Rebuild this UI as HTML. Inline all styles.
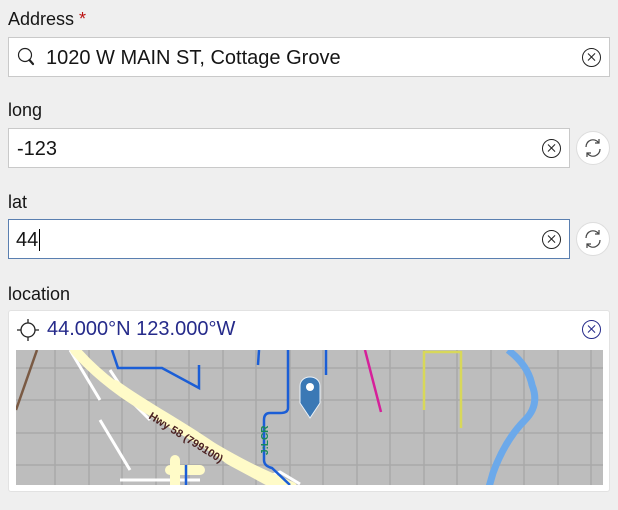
<!DOCTYPE html>
<html><head><style>
body{margin:0;width:618px;height:510px;background:#efefef;font-family:"Liberation Sans",sans-serif;color:#151515;position:relative;overflow:hidden}
.lbl{position:absolute;left:8px;font-size:18px}
.inp{position:absolute;left:8px;background:#fff;border:1px solid #c9c9c9;box-sizing:border-box;height:40px;font-size:20px;line-height:40px}
.x{position:absolute;width:19px;height:19px;border:1.3px solid #222;border-radius:50%;top:10px;box-sizing:border-box}
.x:before,.x:after{content:"";position:absolute;left:7.6px;top:3.2px;width:1.2px;height:10px;background:#222;transform:rotate(45deg)}
.x:after{transform:rotate(-45deg)}
.rb{position:absolute;left:576px;width:34px;height:34px;border-radius:50%;background:#fff;border:1px solid #ddd;box-sizing:border-box}
</style></head><body>
<div class="lbl" style="top:9px">Address <span style="color:#b11">*</span></div>
<div class="inp" style="top:37px;width:602px">
<svg style="position:absolute;left:7px;top:8px" width="22" height="22" viewBox="0 0 22 22"><circle cx="9" cy="9" r="6.5" fill="none" stroke="#222" stroke-width="1.2"/><path d="M13.5 14l3.5 4" stroke="#222" stroke-width="2.2" stroke-linecap="round"/></svg>
<span style="position:absolute;left:37px">1020 W MAIN ST, Cottage Grove</span>
<div class="x" style="left:573px"></div></div>

<div class="lbl" style="top:100px">long</div>
<div class="inp" style="top:128px;width:562px"><span style="position:absolute;left:8px">-123</span><div class="x" style="left:533px"></div></div>
<div class="rb" style="top:131px"><svg width="32" height="32" viewBox="0 0 32 32"><path d="M9 15a7 7 0 0 1 12.5-4.5M23 17a7 7 0 0 1-12.5 4.5" fill="none" stroke="#444" stroke-width="1.2"/><path d="M22 7v4h-4M10 25v-4h4" fill="none" stroke="#444" stroke-width="1.2"/></svg></div>

<div class="lbl" style="top:192px">lat</div>
<div class="inp" style="top:219px;width:562px;border-color:#5a7fb0"><span style="position:absolute;left:7px">44<span style="border-left:1px solid #000;margin-left:1px"></span></span><div class="x" style="left:533px"></div></div>
<div class="rb" style="top:222px"><svg width="32" height="32" viewBox="0 0 32 32"><path d="M9 15a7 7 0 0 1 12.5-4.5M23 17a7 7 0 0 1-12.5 4.5" fill="none" stroke="#444" stroke-width="1.2"/><path d="M22 7v4h-4M10 25v-4h4" fill="none" stroke="#444" stroke-width="1.2"/></svg></div>

<div class="lbl" style="top:284px">location</div>
<div style="position:absolute;left:8px;top:310px;width:602px;height:182px;background:#fff;border-radius:3px;border:1px solid #e2e2e2;box-sizing:border-box"></div>
<svg style="position:absolute;left:16px;top:318px" width="24" height="24" viewBox="0 0 24 24"><circle cx="12" cy="12" r="7" fill="none" stroke="#222" stroke-width="1.3"/><path d="M12 1v4M12 19v4M1 12h4M19 12h4" stroke="#222" stroke-width="1.3"/></svg>
<div style="position:absolute;left:47px;top:318px;font-size:20px;color:#252a8a">44.000°N 123.000°W</div>
<div class="x xb" style="left:582px;top:320px;border-color:#252a8a"></div>
<style>.xb:before,.xb:after{background:#252a8a}</style>
<svg style="position:absolute;left:16px;top:350px" width="587" height="135" viewBox="16 350 587 135">
<rect x="16" y="350" width="587" height="135" fill="#bdbdbd"/>
<g stroke="#a9a9a9" stroke-width="1.5">
<path d="M55 350v135M89 350v135M122 350v135M156 350v135M189 350v135M223 350v135M256 350v135M290 350v135M323 350v135M357 350v135M390 350v135M424 350v135M457 350v135M491 350v135M524 350v135M558 350v135M591 350v135"/>
<path d="M16 368h587M16 400h587M16 433h587M16 465h587"/>
</g>
<path d="M37 350L16 410" stroke="#7a5a44" stroke-width="2.5" fill="none"/>
<g stroke="#fff" stroke-width="3" fill="none"><path d="M70 350l30 50M110 370l20 30 20 20M100 420l30 50M120 480l80 0M260 480l20-8 20 12"/></g>
<g stroke="#fffbc8" stroke-width="10" fill="none" stroke-linecap="round"><path d="M75 350C110 390 150 410 200 440S265 475 292 487"/><path d="M115 385C150 410 190 430 230 460L280 487"/><path d="M175 460v30M170 470h30"/></g>
<g stroke="#1b5ed6" stroke-width="2.5" fill="none"><path d="M112 350L118 368H162L199 388V365"/><path d="M259 350L258 365"/><path d="M288 350V408Q288 413 280 413H270Q264 413 264 420V460Q264 466 272 468L290 485"/><path d="M326 350V375"/><path d="M186 465V485"/></g>
<path d="M365 350L381 412" stroke="#d6209a" stroke-width="2.5" fill="none"/>
<path d="M424 410V352H461V428" stroke="#d8d85a" stroke-width="2.5" fill="none"/>
<path d="M508 350Q528 365 532 385Q540 405 525 420Q505 440 493 473L489 487" stroke="#6ca9ea" stroke-width="7" fill="none"/>
<text x="148" y="418" transform="rotate(32 148 418)" font-size="11" font-weight="bold" fill="#4a2020" font-family="Liberation Sans">Hwy 58 (799100)</text>
<text x="268" y="455" transform="rotate(-90 268 455)" font-size="10" font-weight="bold" fill="#1a8a5a" font-family="Liberation Sans">J:LCR</text>
<path d="M310 377c-6 0-10 4-10 9v17l10 15 10-15v-17c0-5-4-9-10-9z" fill="#3a78b5" stroke="#eaf1f8" stroke-width="1"/>
<circle cx="310" cy="387" r="4" fill="#fff"/>
</svg>
</body></html>
